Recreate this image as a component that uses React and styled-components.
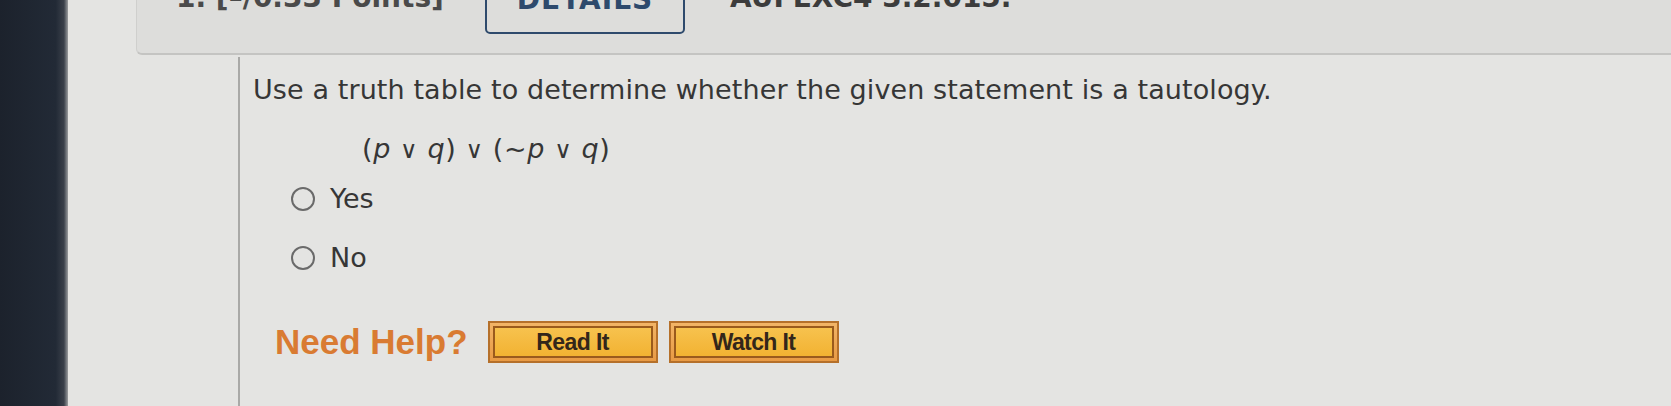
import styled, { createGlobalStyle } from "styled-components";

const Global = createGlobalStyle`
  html, body {
    margin: 0;
    padding: 0;
    background: #e4e4e2;
  }
  #root {
    width: 1671px;
    height: 406px;
    overflow: hidden;
  }
`;

const Screen = styled.div`
  display: flex;
  width: 1671px;
  height: 406px;
  background: #e4e4e2;
  overflow: hidden;
`;

const Bezel = styled.div`
  width: 68px;
  flex-shrink: 0;
  background: linear-gradient(90deg, #1c222c 0%, #222a36 82%, #3a404a 94%, #9a9c9e 100%);
`;

const Page = styled.div`
  flex: 1;
  display: flex;
  flex-direction: column;
  min-width: 0;
`;

const Header = styled.div`
  margin-left: 68px;
  height: 53px;
  flex-shrink: 0;
  background: #dddddb;
  border-left: 1px solid #cfcfcd;
  border-bottom: 2px solid #c4c4c2;
  border-bottom-left-radius: 6px;
  overflow: hidden;
`;

const HeaderRow = styled.div`
  display: flex;
  align-items: flex-start;
  padding-left: 39px;
  font-family: "DejaVu Sans", Verdana, sans-serif;
  font-weight: bold;
  font-size: 28px;
  line-height: 28px;
  color: #4a4a4a;
`;

const QuestionNo = styled.div`
  width: 309px;
  margin-top: -16px;
  white-space: nowrap;
`;

const DetailsButton = styled.div`
  width: 196px;
  height: 55px;
  margin-top: -25px;
  border: 2px solid #2e4a6c;
  border-radius: 5px;
  text-align: center;
  color: #2e4a6c;
  letter-spacing: 1px;
  & > span {
    display: block;
    margin-top: 9px;
  }
`;

const Ref = styled.div`
  margin: -16px 0 0 45px;
  white-space: nowrap;
  color: #3c3c3c;
`;

const Body = styled.div`
  flex: 1;
  display: flex;
  margin-top: 2px;
`;

const Gutter = styled.div`
  width: 170px;
  flex-shrink: 0;
  border-right: 2px solid #a9a9a7;
`;

const Question = styled.div`
  flex: 1;
  padding: 16px 0 0 13px;
  font-family: "DejaVu Sans", Verdana, sans-serif;
  color: #363636;
`;

const Prompt = styled.div`
  font-size: 27px;
  line-height: 34px;
  white-space: nowrap;
  letter-spacing: 0.1px;
`;

const Formula = styled.div`
  margin: 25px 0 0 109px;
  font-size: 27px;
  line-height: 34px;
  white-space: nowrap;
  letter-spacing: 0.6px;
  i {
    font-style: italic;
  }
`;

const Or = styled.span`
  font-size: 24px;
`;

const Choices = styled.div`
  display: flex;
  flex-direction: column;
  gap: 25px;
  margin: 15px 0 0 38px;
`;

const Choice = styled.label`
  display: flex;
  align-items: center;
  gap: 15px;
  font-size: 27px;
  line-height: 34px;
`;

const Radio = styled.span`
  width: 20px;
  height: 20px;
  border: 2px solid #6a6a6a;
  border-radius: 50%;
`;

const Help = styled.div`
  display: flex;
  align-items: center;
  gap: 11px;
  margin: 46px 0 0 22px;
`;

const HelpLabel = styled.span`
  font-family: "Liberation Sans", Arial, sans-serif;
  font-weight: bold;
  font-size: 35px;
  color: #d97b32;
  margin-right: 9px;
`;

const HelpButton = styled.div`
  width: 170px;
  height: 42px;
  padding: 3px;
  box-sizing: border-box;
  border: 2px solid #b5702a;
  background: linear-gradient(#f2b466, #e89a44);
  display: flex;
`;

const HelpInner = styled.div`
  flex: 1;
  border: 2px solid #9a5a1c;
  background: linear-gradient(#f7c24e, #f2b232);
  display: flex;
  align-items: center;
  justify-content: center;
  font-family: "Liberation Sans", Arial, sans-serif;
  font-weight: bold;
  font-size: 23px;
  color: #33261a;
  letter-spacing: -0.6px;
`;

export default function App() {
  return (
    <>
      <Global />
      <Screen>
        <Bezel />
        <Page>
          <Header>
            <HeaderRow>
              <QuestionNo>1. [–/0.33 Points]</QuestionNo>
              <DetailsButton>
                <span>DETAILS</span>
              </DetailsButton>
              <Ref>AUFEXC4 3.2.015.</Ref>
            </HeaderRow>
          </Header>
          <Body>
            <Gutter />
            <Question>
              <Prompt>
                Use a truth table to determine whether the given statement is a tautology.
              </Prompt>
              <Formula>
                (<i>p</i> <Or>∨</Or> <i>q</i>) <Or>∨</Or> (~<i>p</i> <Or>∨</Or> <i>q</i>)
              </Formula>
              <Choices>
                <Choice>
                  <Radio />
                  Yes
                </Choice>
                <Choice>
                  <Radio />
                  No
                </Choice>
              </Choices>
              <Help>
                <HelpLabel>Need Help?</HelpLabel>
                <HelpButton>
                  <HelpInner>Read It</HelpInner>
                </HelpButton>
                <HelpButton>
                  <HelpInner>Watch It</HelpInner>
                </HelpButton>
              </Help>
            </Question>
          </Body>
        </Page>
      </Screen>
    </>
  );
}
